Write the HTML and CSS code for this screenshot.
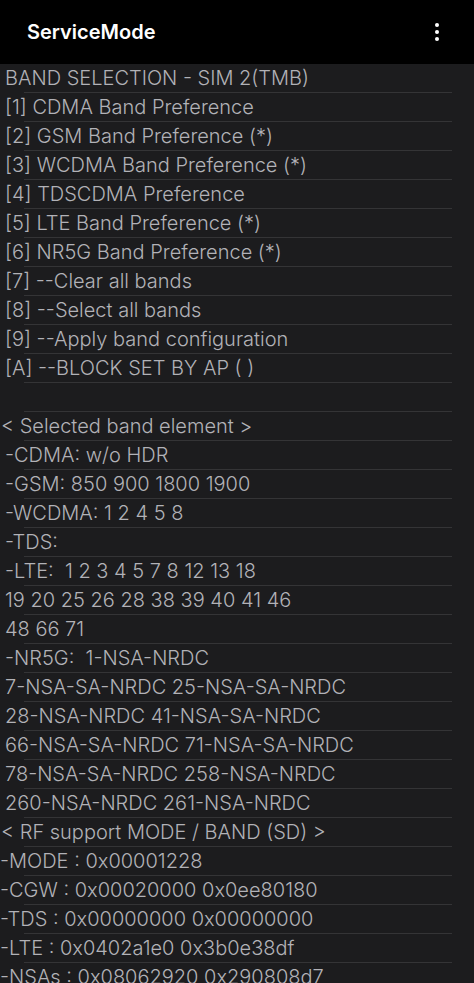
FILE: index.html
```html
<!DOCTYPE html>
<html lang="en">
<head>
  <meta charset="UTF-8" />
  <meta name="viewport" content="width=device-width, initial-scale=1.0"/>
  <title>ServiceMode</title>
  <link rel="stylesheet" href="styles.css">
</head>
<body>
<header class="appbar">
  <h1>ServiceMode</h1>
  <svg class="more" width="6" height="20" viewBox="0 0 6 20">
    <circle cx="3" cy="3" r="2" fill="#fff"/>
    <circle cx="3" cy="10" r="2" fill="#fff"/>
    <circle cx="3" cy="17" r="2" fill="#fff"/>
  </svg>
</header>
<main class="list">
  <div class="row">BAND SELECTION - SIM 2(TMB)</div>
  <div class="row">[1] CDMA Band Preference</div>
  <div class="row">[2] GSM Band Preference (*)</div>
  <div class="row">[3] WCDMA Band Preference (*)</div>
  <div class="row">[4] TDSCDMA Preference</div>
  <div class="row">[5] LTE Band Preference (*)</div>
  <div class="row">[6] NR5G Band Preference (*)</div>
  <div class="row">[7] --Clear all bands</div>
  <div class="row">[8] --Select all bands</div>
  <div class="row">[9] --Apply band configuration</div>
  <div class="row">[A] --BLOCK SET BY AP ( )</div>
  <div class="row"></div>
  <div class="row hdr">&lt; Selected band element &gt;</div>
  <div class="row">-CDMA: w/o HDR</div>
  <div class="row">-GSM: 850 900 1800 1900</div>
  <div class="row">-WCDMA: 1 2 4 5 8</div>
  <div class="row">-TDS:</div>
  <div class="row">-LTE:  1 2 3 4 5 7 8 12 13 18</div>
  <div class="row">19 20 25 26 28 38 39 40 41 46</div>
  <div class="row">48 66 71</div>
  <div class="row">-NR5G:  1-NSA-NRDC</div>
  <div class="row">7-NSA-SA-NRDC 25-NSA-SA-NRDC</div>
  <div class="row">28-NSA-NRDC 41-NSA-SA-NRDC</div>
  <div class="row">66-NSA-SA-NRDC 71-NSA-SA-NRDC</div>
  <div class="row">78-NSA-SA-NRDC 258-NSA-NRDC</div>
  <div class="row">260-NSA-NRDC 261-NSA-NRDC</div>
  <div class="row hdr">&lt; RF support MODE / BAND (SD) &gt;</div>
  <div class="row rf">-MODE : 0x00001228</div>
  <div class="row rf">-CGW : 0x00020000 0x0ee80180</div>
  <div class="row rf">-TDS : 0x00000000 0x00000000</div>
  <div class="row rf">-LTE : 0x0402a1e0 0x3b0e38df</div>
  <div class="row rf">-NSAs : 0x08062920 0x290808d7</div>
</main>
</body>
</html>
```
FILE: styles.css
```css
body {
  margin: 0;
  background: #1c1c1e;
  font-family: Inter, "Noto Sans", sans-serif;
  overflow: hidden;
}
.appbar {
  height: 64px;
  background: #000;
  display: flex;
  align-items: center;
  justify-content: space-between;
  padding: 0 34px 0 27px;
}
.appbar h1 {
  margin: 0;
  color: #fff;
  font-size: 20px;
  font-weight: 600;
}
.list {
  display: flex;
  flex-direction: column;
}
.row {
  height: 29px;
  line-height: 29px;
  padding-left: 5px;
  font-size: 20px;
  font-weight: 300;
  color: #b2b2b7;
  white-space: pre;
  background: linear-gradient(#343436, #343436) no-repeat 24px 100% / 428px 1px;
}
.hdr {
  padding-left: 1px;
}
.rf {
  padding-left: 0;
}
```
